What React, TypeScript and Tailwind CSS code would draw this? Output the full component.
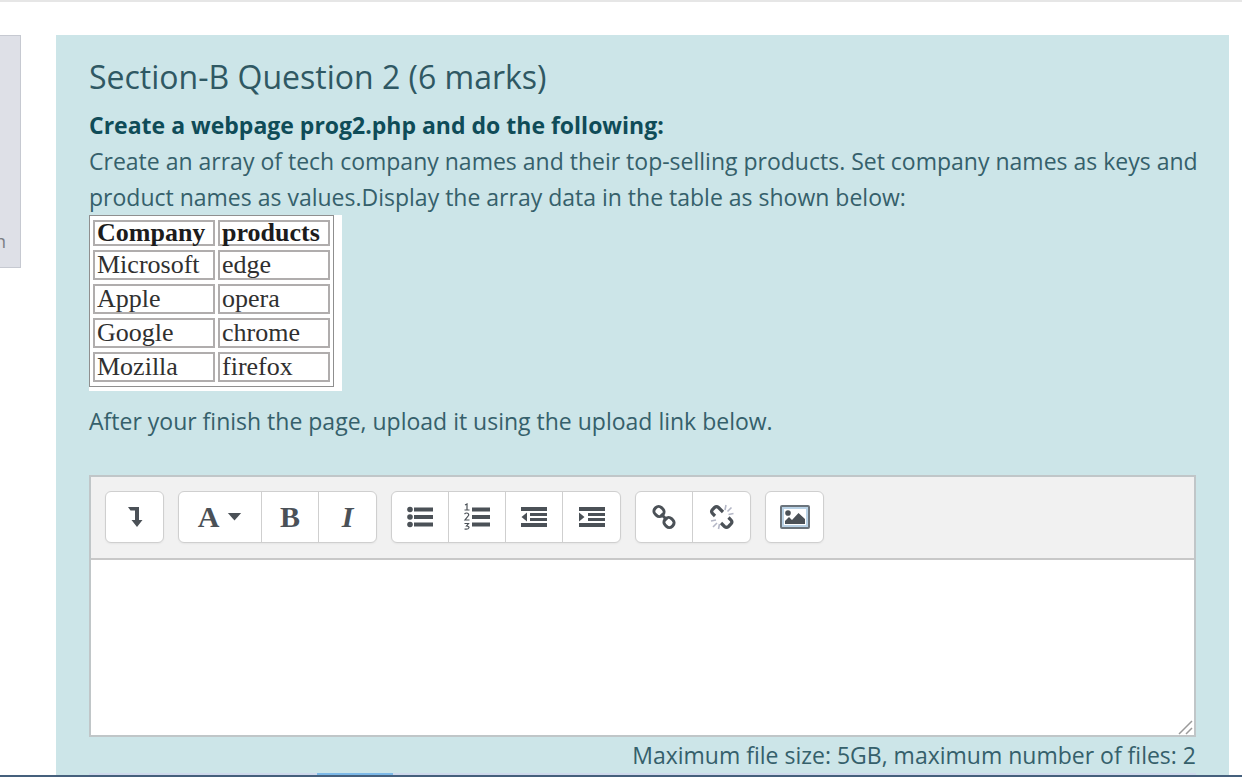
import { ReactNode, useState } from "react";

const rows = [
  { company: "Microsoft", product: "edge" },
  { company: "Apple", product: "opera" },
  { company: "Google", product: "chrome" },
  { company: "Mozilla", product: "firefox" },
];

function ButtonGroup({ children }: { children: ReactNode }) {
  return (
    <div className="flex h-[52px] divide-x divide-[#cfcfcf] overflow-hidden rounded-md border border-[#cfcfcf] bg-white shadow-xs">
      {children}
    </div>
  );
}

function ToolButton({
  label,
  wide,
  children,
}: {
  label: string;
  wide?: boolean;
  children: ReactNode;
}) {
  return (
    <button
      type="button"
      aria-label={label}
      title={label}
      className={
        (wide ? "w-[83px]" : "w-[57px]") +
        " flex items-center justify-center gap-2 font-['Liberation_Serif',serif] text-[30px] leading-none font-bold text-[#4b5157] hover:bg-gray-100"
      }
    >
      {children}
    </button>
  );
}

function ToggleIcon() {
  return (
    <svg width="16" height="22" viewBox="0 0 16 22" fill="currentColor">
      <path d="M1 1h11v13h3.500L10 21l-5.500-7H8V4.500H3.500z" />
    </svg>
  );
}

function CaretIcon() {
  return (
    <svg width="15" height="8" viewBox="0 0 16 9" fill="currentColor">
      <path d="M0.500 0h15L8 8.500z" />
    </svg>
  );
}

function BulletListIcon() {
  return (
    <svg width="28" height="22" viewBox="0 0 28 22" fill="currentColor">
      <circle cx="4" cy="3.500" r="2.800" />
      <circle cx="4" cy="11" r="2.800" />
      <circle cx="4" cy="18.500" r="2.800" />
      <path d="M8 1.500h19v4H8zM8 9h19v4H8zM8 16.500h19v4H8z" />
    </svg>
  );
}

function NumberListIcon() {
  return (
    <svg width="28" height="28" viewBox="0 0 28 28" fill="currentColor">
      <path d="M9 4.500h18v4H9zM9 12h18v4H9zM9 19.500h18v4H9z" />
      <path
        d="M2 2l2-1v6M1.500 7h5M1.500 11c2-2 5-.5 4 1.500L2 17h4.500M1.500 20.500h4l-2 2.500c4 0 3 4-2 3"
        fill="none"
        stroke="currentColor"
        strokeWidth="1.200"
      />
    </svg>
  );
}

function OutdentIcon() {
  return (
    <svg width="28" height="22" viewBox="0 0 28 22" fill="currentColor">
      <path d="M1 1h26v4H1zM10 7h17v3H10zM10 12h17v3H10zM1 17h26v4H1zM7 6.500v9L1.500 11z" />
    </svg>
  );
}

function IndentIcon() {
  return (
    <svg width="28" height="22" viewBox="0 0 28 22" fill="currentColor">
      <path d="M1 1h26v4H1zM10 7h17v3H10zM10 12h17v3H10zM1 17h26v4H1zM1 6.500v9L6.500 11z" />
    </svg>
  );
}

function LinkIcon() {
  return (
    <svg
      width="26"
      height="26"
      viewBox="0 0 26 26"
      fill="none"
      stroke="currentColor"
      strokeWidth="3"
    >
      <rect x="3" y="3" width="10" height="9" rx="4" transform="rotate(45 8 7.500)" />
      <rect x="13" y="14" width="10" height="9" rx="4" transform="rotate(45 18 18.500)" />
      <path d="M10 10l6 6" />
    </svg>
  );
}

function UnlinkIcon() {
  return (
    <svg width="28" height="28" viewBox="0 0 28 28" fill="none" stroke="currentColor">
      <path
        d="M7 13L4.500 10.500a3 3 0 0 1 0-4L6.500 4.500a3 3 0 0 1 4 0L15 9M13 20l3.500 3.500a3 3 0 0 0 4 0l2.500-2.500a3 3 0 0 0 0-4L20.500 14.500"
        strokeWidth="3.200"
      />
      <path
        d="M17 7l1-5M19.500 8.500l4-4M20.500 11.500l5-1M3 18l5-1M5 24l4-4M10.500 26l1-5"
        stroke="#b4b7c6"
        strokeWidth="1.600"
      />
    </svg>
  );
}

function ImageIcon() {
  return (
    <svg width="30" height="24" viewBox="0 0 30 24" fill="currentColor">
      <rect x="1" y="1" width="28" height="22" rx="1" fill="none" stroke="#6b747c" strokeWidth="2" />
      <rect x="3" y="3" width="24" height="18" fill="none" stroke="#b9d2e6" strokeWidth="2" />
      <circle cx="8" cy="8" r="2.800" />
      <path d="M5 19v-3l4-4 3 3 6.500-7 6.500 6v5z" />
    </svg>
  );
}

function ResizeGrip() {
  return (
    <svg
      className="pointer-events-none absolute right-0 bottom-0"
      width="16"
      height="16"
      viewBox="0 0 16 16"
      fill="none"
      stroke="#9a9a9a"
      strokeWidth="1.500"
    >
      <path d="M1 15L14 2M8 15l6-6" />
    </svg>
  );
}

export default function App() {
  const [answer, setAnswer] = useState("");

  return (
    <div className="flex min-h-screen flex-col border-t-2 border-[#e6e6e6] bg-white font-['Open_Sans',sans-serif] text-[#35606b]">
      <main className="flex flex-1 items-stretch pt-[33px] pr-[13px]">
        <aside className="mr-[35px] flex h-[233px] w-[21px] shrink-0 items-end justify-end overflow-hidden border border-l-0 border-[#c6c9d1] bg-[#dee0e7] pr-[14px] pb-3 text-lg leading-7 text-[#7b7e84]">
          n
        </aside>

        <section className="flex min-w-0 flex-1 flex-col bg-[#cce5e8] px-[33px] pt-5">
          <h4 className="text-[32px] leading-[44px] text-[#2f5863]">
            Section-B Question 2 (6 marks)
          </h4>
          <p className="mt-2 text-[23px] leading-9 font-bold text-[#0f4c58]">
            Create a webpage prog2.php and do the following:
          </p>
          <p className="-mr-4 text-[23px] leading-9">
            Create an array of tech company names and their top-selling products. Set company names as keys and
            product names as values.Display the array data in the table as shown below:
          </p>

          <div className="w-fit bg-white pr-2 pb-1">
            <table className="border-separate border-spacing-x-[3px] border-spacing-y-1 border border-[#8f8f8f] font-['Liberation_Serif',serif] text-[26px] leading-6 text-[#303030]">
              <thead>
                <tr className="h-[26px]">
                  <th className="w-[122px] border-2 border-[#b0adad] px-[2px] py-0 text-left leading-[22px] text-[#1c1c1c]">
                    Company
                  </th>
                  <th className="w-[112px] border-2 border-[#b0adad] px-[2px] py-0 text-left leading-[22px] text-[#1c1c1c]">
                    products
                  </th>
                </tr>
              </thead>
              <tbody>
                {rows.map((row) => (
                  <tr key={row.company} className="h-[30px]">
                    <td className="border-2 border-[#b0adad] px-[2px]">{row.company}</td>
                    <td className="border-2 border-[#b0adad] px-[2px]">{row.product}</td>
                  </tr>
                ))}
              </tbody>
            </table>
          </div>

          <p className="mt-3 text-[23px] leading-9">
            After your finish the page, upload it using the upload link below.
          </p>

          <div className="mt-9 border-2 border-[#c0c6c8] bg-white">
            <div className="flex flex-wrap gap-[14px] border-b-2 border-[#c8c8c8] bg-[#f1f1f1] px-[14px] pt-[14px] pb-[15px]">
              <ButtonGroup>
                <ToolButton label="Show more buttons">
                  <ToggleIcon />
                </ToolButton>
              </ButtonGroup>
              <ButtonGroup>
                <ToolButton label="Paragraph styles" wide>
                  A
                  <CaretIcon />
                </ToolButton>
                <ToolButton label="Bold">B</ToolButton>
                <ToolButton label="Italic">
                  <i>I</i>
                </ToolButton>
              </ButtonGroup>
              <ButtonGroup>
                <ToolButton label="Unordered list">
                  <BulletListIcon />
                </ToolButton>
                <ToolButton label="Ordered list">
                  <NumberListIcon />
                </ToolButton>
                <ToolButton label="Outdent">
                  <OutdentIcon />
                </ToolButton>
                <ToolButton label="Indent">
                  <IndentIcon />
                </ToolButton>
              </ButtonGroup>
              <ButtonGroup>
                <ToolButton label="Link">
                  <LinkIcon />
                </ToolButton>
                <ToolButton label="Unlink">
                  <UnlinkIcon />
                </ToolButton>
              </ButtonGroup>
              <ButtonGroup>
                <ToolButton label="Insert image">
                  <ImageIcon />
                </ToolButton>
              </ButtonGroup>
            </div>
            <div className="relative">
              <textarea
                aria-label="Answer text"
                className="block h-[175px] w-full resize-none bg-white p-3 text-[23px] outline-none"
                value={answer}
                onChange={(event) => setAnswer(event.target.value)}
              />
              <ResizeGrip />
            </div>
          </div>
          <p className="text-right text-[23px] leading-9">
            Maximum file size: 5GB, maximum number of files: 2
          </p>
          <div className="mt-auto flex h-[2px] bg-[#cfd9ec]">
            <div className="ml-[228px] w-[76px] bg-[#7db9e8]" />
          </div>
        </section>
      </main>
      <div className="h-[2px] bg-[#45607c]" />
    </div>
  );
}
